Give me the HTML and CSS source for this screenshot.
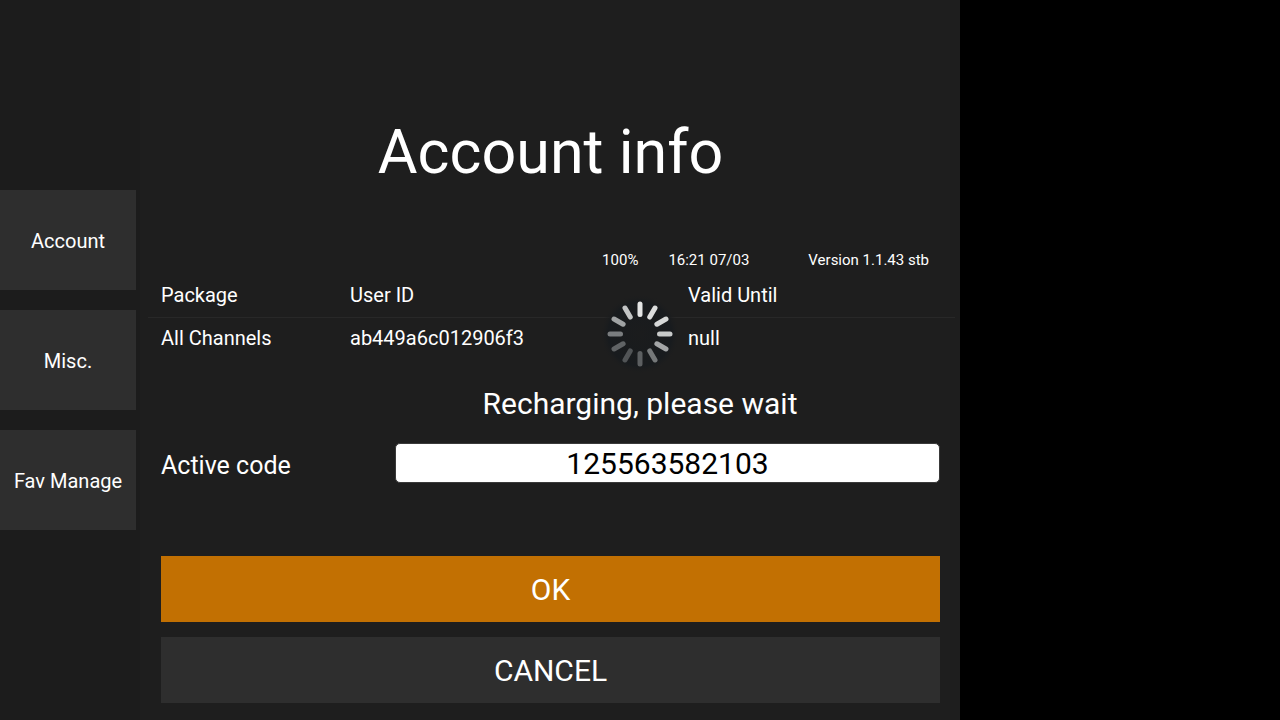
FILE: index.html
```html
<!DOCTYPE html>
<html lang="en">
<head>
  <meta charset="UTF-8">
  <meta name="viewport" content="width=device-width, initial-scale=1.0">
  <title>Account info</title>
  <link rel="stylesheet" href="styles.css">
</head>
<body>
  <div class="app">
    <nav class="sidebar">
      <button type="button" class="side-btn">Account</button>
      <button type="button" class="side-btn">Misc.</button>
      <button type="button" class="side-btn">Fav Manage</button>
    </nav>

    <main class="panel">
      <h1>Account info</h1>

      <div class="status">
        <span>100%</span>
        <span class="clock">16:21 07/03</span>
        <span class="version">Version 1.1.43 stb</span>
      </div>

      <table class="packages">
        <thead>
          <tr>
            <th class="col-package">Package</th>
            <th class="col-user">User ID</th>
            <th>Valid Until</th>
          </tr>
        </thead>
        <tbody>
          <tr>
            <td>All Channels</td>
            <td>ab449a6c012906f3</td>
            <td>null</td>
          </tr>
        </tbody>
      </table>

      <form class="recharge">
        <div class="field">
          <label for="code">Active code</label>
          <input type="text" id="code" value="125563582103">
        </div>
        <button type="button" class="btn btn-ok">OK</button>
        <button type="button" class="btn btn-cancel">CANCEL</button>
      </form>
    </main>
  </div>

  <!-- loading message, shown over the whole screen -->
  <div class="loading" role="status">
    <svg class="spinner" viewBox="-40 -40 80 80" aria-hidden="true">
      <defs>
        <radialGradient id="glow">
          <stop offset="0" stop-color="#1b1c1d"/>
          <stop offset="0.8" stop-color="#181b1e"/>
          <stop offset="1" stop-color="#1e1e1e" stop-opacity="0"/>
        </radialGradient>
      </defs>
      <circle r="40" fill="url(#glow)"/>
      <g stroke-width="5" stroke-linecap="round">
        <path d="M0-19.500V-30" stroke="#e4e5e5"/>
        <path d="M0-19.500V-30" stroke="#dcdddd" transform="rotate(30)"/>
        <path d="M0-19.500V-30" stroke="#d6d8d8" transform="rotate(60)"/>
        <path d="M0-19.500V-30" stroke="#c8caca" transform="rotate(90)"/>
        <path d="M0-19.500V-30" stroke="#a4a6a7" transform="rotate(120)"/>
        <path d="M0-19.500V-30" stroke="#757879" transform="rotate(150)"/>
        <path d="M0-19.500V-30" stroke="#5c5f61" transform="rotate(180)"/>
        <path d="M0-19.500V-30" stroke="#515456" transform="rotate(210)"/>
        <path d="M0-19.500V-30" stroke="#606365" transform="rotate(240)"/>
        <path d="M0-19.500V-30" stroke="#7a7d7f" transform="rotate(270)"/>
        <path d="M0-19.500V-30" stroke="#a0a3a4" transform="rotate(300)"/>
        <path d="M0-19.500V-30" stroke="#c2c4c4" transform="rotate(330)"/>
      </g>
    </svg>
    <p>Recharging, please wait</p>
  </div>
</body>
</html>
```
FILE: styles.css
```css
* {
  box-sizing: border-box;
  margin: 0;
  padding: 0;
}

body {
  font-family: Roboto, "Noto Sans", sans-serif;
  background: #000;
  color: #fff;
  min-height: 100vh;
}

button,
input {
  font-family: inherit;
  border: none;
}

button {
  color: #fff;
  cursor: pointer;
}

.app {
  display: flex;
  width: 75%;
  min-height: 100vh;
  background: #1e1e1e;
}

.sidebar {
  display: flex;
  flex-direction: column;
  justify-content: center;
  gap: 20px;
  width: 140px;
  padding-right: 4px;
  background: #1c1c1c;
}

.side-btn {
  height: 100px;
  padding-top: 2px;
  font-size: 20px;
  background: #2e2e2e;
}

.panel {
  flex: 1;
  padding: 117px 5px 17px 8px;
}

h1 {
  padding-right: 2px;
  font-size: 61px;
  font-weight: normal;
  line-height: 70px;
  text-align: center;
}

.status {
  display: flex;
  justify-content: flex-end;
  margin-top: 60px;
  padding-right: 26px;
  font-size: 15px;
  line-height: 26px;
}

.clock {
  margin-left: 30px;
}

.version {
  margin-left: 59px;
}

.packages {
  width: 100%;
  border-collapse: collapse;
  table-layout: fixed;
  font-size: 20px;
  line-height: 24px;
  text-align: left;
}

.packages th {
  padding: 10px 13px;
  font-weight: normal;
  border-bottom: 1px solid #282828;
}

.packages td {
  padding: 8px 13px;
}

.col-package {
  width: 189px;
}

.col-user {
  width: 338px;
}

.recharge {
  padding: 0 15px 0 13px;
}

.field {
  display: flex;
  align-items: center;
  margin: 85px 0 73px;
}

.field label {
  width: 234px;
  padding-top: 4px;
  font-size: 25px;
}

.field input {
  flex: 1;
  min-width: 0;
  height: 40px;
  font-size: 30px;
  text-align: center;
  color: #000;
  background: #fff;
  border: 1px solid #3a3a3a;
  border-radius: 5px;
}

.btn {
  display: block;
  width: 100%;
  height: 66px;
  font-size: 30px;
}

.btn-ok {
  margin-bottom: 15px;
  background: #c27002;
}

.btn-cancel {
  background: #2e2e2e;
}

.loading {
  position: absolute;
  inset: 0;
  display: flex;
  flex-direction: column;
  align-items: center;
  justify-content: center;
  gap: 12px;
  padding-bottom: 5px;
  font-size: 30px;
  pointer-events: none;
}

.spinner {
  width: 80px;
  height: 80px;
}
```
